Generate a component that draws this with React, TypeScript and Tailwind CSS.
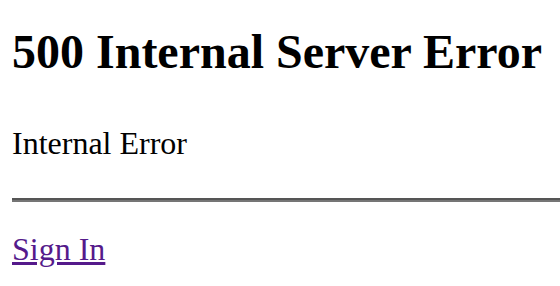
export default function App() {
    return (
        <div className="min-h-[286px] overflow-hidden bg-white px-[12px] font-['Liberation_Serif','Times_New_Roman',serif] text-black">
            <h1 className="pt-[24px] text-[48px] font-bold leading-[55px] whitespace-nowrap">
                500 Internal Server Error
            </h1>
            <p className="mt-[46px] text-[32px] leading-[37px]">Internal Error</p>
            <hr className="mt-[36px] -mr-[12px] h-[4px] border-0 border-t-[2px] border-b-[2px] border-t-[#555555] border-b-[#757575]" />
            <p className="mt-[29px] text-[32px] leading-[37px]">
                <a href="#" className="text-[#551a8b] underline">
                    Sign In
                </a>
            </p>
        </div>
    );
}
